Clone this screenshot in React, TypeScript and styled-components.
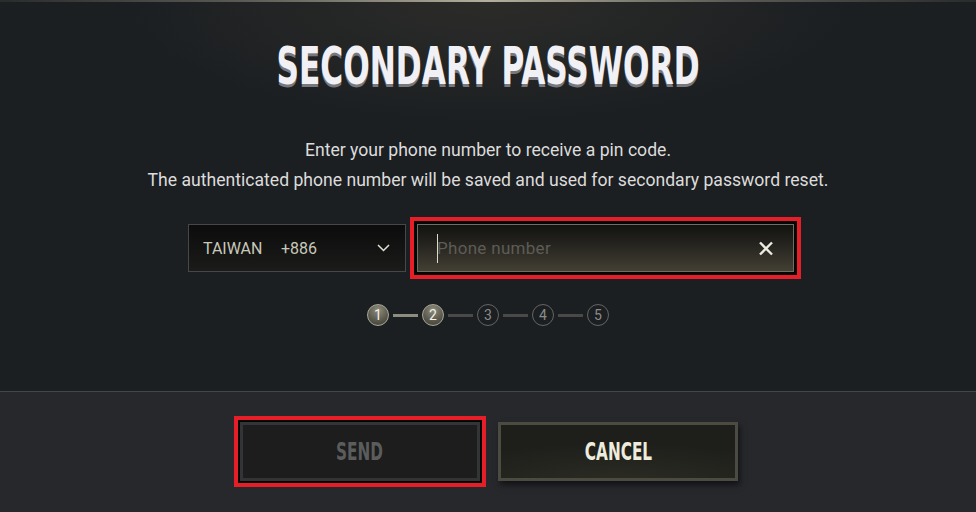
import React from "react";
import styled, { createGlobalStyle } from "styled-components";

const GlobalStyle = createGlobalStyle`
  html, body {
    margin: 0;
    padding: 0;
    background: #1c1f22;
  }
  * {
    box-sizing: border-box;
  }
`;

const steps = [1, 2, 3, 4, 5];
const activeStep = 2;

const App = () => {
  return (
    <>
      <GlobalStyle />
      <StyledPage>
        <TopBar />
        <Main>
          <Title>
            <TitleText>SECONDARY PASSWORD</TitleText>
          </Title>
          <Description>
            Enter your phone number to receive a pin code.
            <br />
            The authenticated phone number will be saved and used for secondary
            password reset.
          </Description>
          <FormRow>
            <CountrySelect>
              <CountryName>TAIWAN</CountryName>
              <CountryCode>+886</CountryCode>
              <Chevron width="13" height="8" viewBox="0 0 13 8">
                <polyline
                  points="1,1 6.5,6.5 12,1"
                  fill="none"
                  stroke="#e2e1d8"
                  strokeWidth="1.5"
                />
              </Chevron>
            </CountrySelect>
            <Highlight $pad={3}>
              <PhoneInput>
                <Caret />
                <Placeholder>Phone number</Placeholder>
                <ClearIcon width="16" height="15" viewBox="0 0 16 15">
                  <line x1="2" y1="1.5" x2="14" y2="13.5" stroke="#ecebe0" strokeWidth="2.4" />
                  <line x1="14" y1="1.5" x2="2" y2="13.5" stroke="#ecebe0" strokeWidth="2.4" />
                </ClearIcon>
              </PhoneInput>
            </Highlight>
          </FormRow>
          <Stepper>
            {steps.map((n, i) => (
              <React.Fragment key={n}>
                {i > 0 && <StepLine $lit={n <= activeStep} />}
                <StepDot $done={n <= activeStep}>{n}</StepDot>
              </React.Fragment>
            ))}
          </Stepper>
        </Main>
        <Footer>
          <Highlight $pad={2}>
            <ActionButton $disabled>
              <ButtonLabel>SEND</ButtonLabel>
            </ActionButton>
          </Highlight>
          <ActionButton>
            <ButtonLabel>CANCEL</ButtonLabel>
          </ActionButton>
        </Footer>
      </StyledPage>
    </>
  );
};

const StyledPage = styled.div`
  width: 976px;
  height: 512px;
  display: flex;
  flex-direction: column;
  background: #1c1f22;
  overflow: hidden;
  font-family: Roboto, "Noto Sans", sans-serif;
`;

const TopBar = styled.div`
  height: 2px;
  flex-shrink: 0;
  background: linear-gradient(
    90deg,
    #2a2c2c 0%,
    #5b5a54 25%,
    #b3af9c 50%,
    #5b5a54 75%,
    #2a2c2c 100%
  );
`;

const Main = styled.div`
  height: 389px;
  flex-shrink: 0;
  display: flex;
  flex-direction: column;
  align-items: center;
  padding-top: 39px;
  background: radial-gradient(
    ellipse 360px 120px at 50% 0%,
    rgba(62, 60, 50, 0.45),
    rgba(28, 31, 34, 0) 100%
  );
`;

const Title = styled.h1`
  margin: 0;
  height: 51px;
  display: flex;
  justify-content: center;
  font-family: "DejaVu Sans Condensed", "DejaVu Sans", sans-serif;
  font-weight: 700;
  font-size: 51px;
  line-height: 51px;
  color: #f1f0f5;
  text-shadow: 0 3px 0 #77777c;
`;

const TitleText = styled.span`
  display: inline-block;
  white-space: nowrap;
  transform: scaleX(0.68);
`;

const Description = styled.p`
  margin: 43px 0 0;
  text-align: center;
  font-size: 17.6px;
  line-height: 30px;
  color: #dcdcdc;
`;

const FormRow = styled.div`
  margin: 22px 0 0 13px;
  display: flex;
  align-items: center;
  gap: 4px;
`;

const CountrySelect = styled.div`
  width: 218px;
  height: 48px;
  display: flex;
  align-items: center;
  padding: 0 15px 0 14px;
  border: 1px solid #45474a;
  background: linear-gradient(180deg, #0c0c0c 0%, #1b1b1a 100%);
  font-size: 16px;
  color: #c9c8b9;
`;

const CountryName = styled.span`
  width: 78px;
`;

const CountryCode = styled.span`
  flex: 1;
`;

const Chevron = styled.svg`
  display: block;
`;

const Highlight = styled.div<{ $pad: number }>`
  border: 4px solid #e51e27;
  padding: ${(p) => p.$pad}px;
  background: #050505;
`;

const PhoneInput = styled.div`
  width: 377px;
  height: 48px;
  display: flex;
  align-items: center;
  padding: 0 19px 0 19px;
  border: 1.5px solid #6f6e63;
  background: linear-gradient(180deg, #121210 0%, #262520 45%, #433f33 100%);
`;

const Caret = styled.div`
  width: 1px;
  height: 29px;
  margin-right: -1px;
  background: #dcdccc;
`;

const Placeholder = styled.span`
  flex: 1;
  font-size: 17px;
  letter-spacing: 0.3px;
  color: #5d5c56;
`;

const ClearIcon = styled.svg`
  display: block;
`;

const Stepper = styled.div`
  margin-top: 25px;
  display: flex;
  align-items: center;
  gap: 4px;
`;

const StepDot = styled.div<{ $done: boolean }>`
  width: 22px;
  height: 22px;
  border-radius: 50%;
  display: flex;
  align-items: center;
  justify-content: center;
  font-size: 14px;
  color: ${(p) => (p.$done ? "#f2f1ea" : "#8b8b88")};
  border: 1.5px solid ${(p) => (p.$done ? "#a9a898" : "#646563")};
  background: ${(p) =>
    p.$done
      ? "radial-gradient(circle at 50% 25%, #8e8c7c 0%, #5e5c4f 55%, #3c3b33 100%)"
      : "transparent"};
`;

const StepLine = styled.div<{ $lit: boolean }>`
  width: 25px;
  height: 3px;
  background: ${(p) => (p.$lit ? "#8c8c81" : "#494a48")};
`;

const Footer = styled.div`
  flex: 1;
  display: flex;
  align-items: center;
  justify-content: center;
  gap: 12px;
  padding-right: 4px;
  padding-bottom: 2px;
  border-top: 1px solid #44464a;
  background: #27282c;
`;

const ActionButton = styled.div<{ $disabled?: boolean }>`
  width: 240px;
  height: 59px;
  display: flex;
  align-items: center;
  justify-content: center;
  border: 3px solid ${(p) => (p.$disabled ? "#333436" : "#4b4b41")};
  background: ${(p) =>
    p.$disabled
      ? "#1c1d1c"
      : "radial-gradient(ellipse 200px 40px at 50% 110%, #2c2c24 0%, #1e1f1b 100%)"};
  box-shadow: ${(p) => (p.$disabled ? "none" : "2px 4px 6px rgba(0, 0, 0, 0.55)")};
  color: ${(p) => (p.$disabled ? "#5b5c5c" : "#edecdd")};
  font-family: "DejaVu Sans Condensed", "DejaVu Sans", sans-serif;
  font-weight: 700;
  font-size: 25px;
`;

const ButtonLabel = styled.span`
  display: inline-block;
  transform: scaleX(0.68);
`;

export default App;
